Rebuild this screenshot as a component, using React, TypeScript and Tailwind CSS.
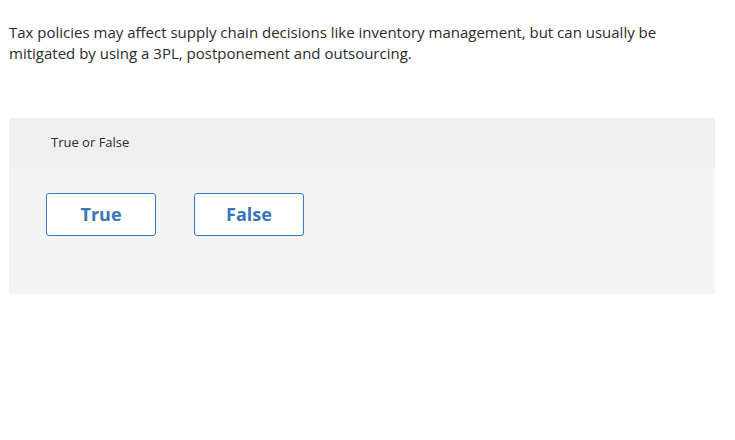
export default function App() {
  return (
    <div className="w-[735px] h-[440px] bg-white" style={{ fontFamily: "'Open Sans', sans-serif" }}>
      <div className="pt-[22px] pl-[9px] pr-[60px] text-[15px] leading-[21px] text-[#2b2b2b]">
        Tax policies may affect supply chain decisions like inventory management, but can usually be mitigated by using a 3PL, postponement and outsourcing.
      </div>
      <div className="mt-[54px] ml-[9px] w-[706px] rounded-[3px] overflow-hidden bg-[#f4f4f4]">
        <div className="h-[50px] bg-[#f0f0f0] pl-[42px] flex items-center text-[13px] text-[#2b2b2b]">
          True or False
        </div>
        <div className="pt-[25px] pb-[58px] pl-[37px] flex gap-[38px]">
          <button className="w-[110px] h-[43px] bg-white border border-[#3c78bf] rounded-[3px] text-[18px] font-bold text-[#3a74b9]">
            True
          </button>
          <button className="w-[110px] h-[43px] bg-white border border-[#3c78bf] rounded-[3px] text-[18px] font-bold text-[#3a74b9]">
            False
          </button>
        </div>
      </div>
    </div>
  );
}
